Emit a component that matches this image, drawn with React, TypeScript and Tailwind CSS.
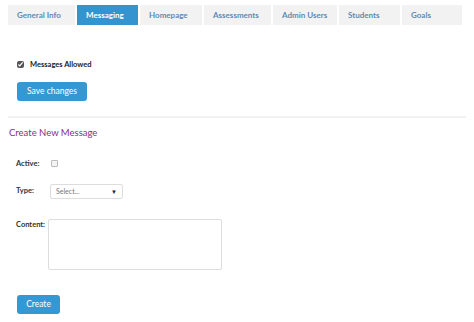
import React from "react";

const tabs = [
  { label: "General Info", w: "w-[67px]" },
  { label: "Messaging", w: "w-[61px]", active: true },
  { label: "Homepage", w: "w-[62px]" },
  { label: "Assessments", w: "w-[67px]" },
  { label: "Admin Users", w: "w-[64px]" },
  { label: "Students", w: "w-[61px]" },
  { label: "Goals", w: "w-[60px]" },
];

export default function App() {
  return (
    <div className="w-[474px] h-[322px] bg-white font-['Lato','Open_Sans',sans-serif] text-[#333] overflow-hidden">
      <div className="pt-[5px] pl-[8px] flex gap-[2px]">
        {tabs.map((t) => (
          <div
            key={t.label}
            className={`${t.w} h-[20px] pl-[9px] flex items-center text-[8px] font-bold ${
              t.active ? "bg-[#3394cf] text-white" : "bg-[#f2f2f2] text-[#5d8ab5]"
            }`}
          >
            {t.label}
          </div>
        ))}
      </div>

      <div className="pl-[17px] pt-[34px] flex items-center gap-[6px]">
        <input type="checkbox" defaultChecked className="w-[7px] h-[7px] m-0 accent-[#555]" />
        <span className="text-[7.5px] font-bold text-[#222]">Messages Allowed</span>
      </div>

      <div className="pl-[17px] pt-[12px]">
        <button className="w-[70px] h-[19px] rounded-[3px] bg-[#3498d3] text-white text-[8.5px] flex items-center justify-center">
          Save changes
        </button>
      </div>

      <div className="ml-[8px] mr-[8px] mt-[15px] h-[2px] bg-[#f2f2f2]" />

      <div className="pl-[9px] pt-[9px] text-[9.5px] text-[#8a2c8c] leading-[12px]">Create New Message</div>

      <div className="pl-[16px] pt-[19px] flex items-center">
        <span className="w-[35px] text-[7.5px] font-bold text-[#333]">Active:</span>
        <div className="w-[7px] h-[7px] border border-[#bbb] bg-[#f4f4f4] rounded-[1px]" />
      </div>

      <div className="pl-[16px] pt-[14px] flex items-center">
        <span className="w-[34px] text-[7.5px] font-bold text-[#333]">Type:</span>
        <div className="w-[73px] h-[15px] border border-[#ddd] rounded-[2px] flex items-center justify-between pl-[5px] pr-[5px] text-[7px] text-[#777]">
          <span>Select...</span>
          <span className="text-[6px] text-[#222]">▼</span>
        </div>
      </div>

      <div className="pl-[16px] pt-[20px] flex items-start">
        <span className="w-[32px] text-[7.5px] font-bold text-[#333]">Content:</span>
        <div className="w-[174px] h-[51px] border border-[#ddd] rounded-[2px]" />
      </div>

      <div className="pl-[17px] pt-[25px]">
        <button className="w-[43px] h-[19px] rounded-[3px] bg-[#3498d3] text-white text-[8.5px] flex items-center justify-center">
          Create
        </button>
      </div>
    </div>
  );
}
